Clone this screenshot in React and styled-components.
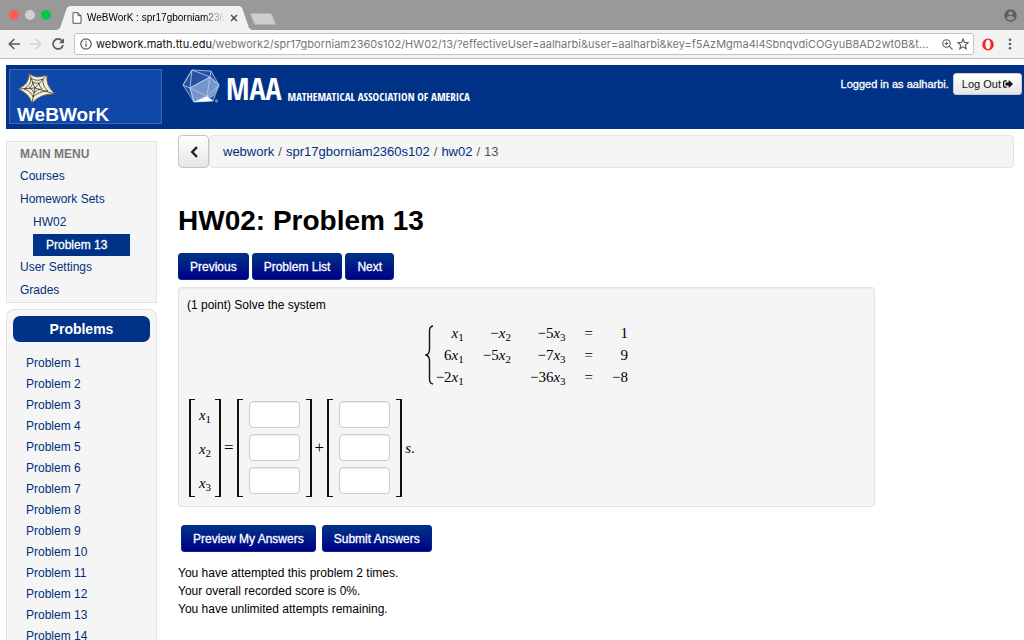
import styled, { createGlobalStyle, css } from 'styled-components'
import { FaSignOutAlt } from 'react-icons/fa'

const COLORS = {
    blue: '#003388',
    link: '#002f7c',
    well: '#f5f5f5',
    wellBorder: '#e3e3e3',
    chrome: '#f2f2f2',
    icon: '#5c5c5c',
}

const problems = Array.from({ length: 14 }, (_, i) => i + 1)

const equations = [
    [['', 1], ['−', 2], ['−5', 3], '1'],
    [['6', 1], ['−5', 2], ['−7', 3], '9'],
    [['−2', 1], null, ['−36', 3], '−8'],
]

export default function App() {
    return (
        <Window>
            <GlobalStyle />
            <BrowserBar />
            <Page>
                <Masthead />
                <Columns>
                    <SideBar />
                    <Problem />
                </Columns>
            </Page>
        </Window>
    )
}

function BrowserBar() {
    return (
        <>
            <TabStrip>
                <Lights>
                    <Light $color="#ff5b57" />
                    <Light $color="#d0d0d0" />
                    <Light $color="#00c94e" />
                </Lights>
                <Tab>
                    <svg width="10" height="12" viewBox="0 0 10 12" fill="#fff" stroke="#555">
                        <path d="M1 .7h5l3 3v7.6H1z M6 .7v3h3" />
                    </svg>
                    <TabTitle>WeBWorK : spr17gborniam236</TabTitle>
                    <PlainButton aria-label="Close tab">
                        <svg width="8" height="8" viewBox="0 0 8 8" stroke="#444" strokeWidth="1.4">
                            <path d="M1 1l6 6M7 1L1 7" />
                        </svg>
                    </PlainButton>
                </Tab>
                <NewTab aria-label="New tab" />
                <Profile width="13" height="13" viewBox="0 0 13 13">
                    <circle cx="6.5" cy="6.5" r="6.2" fill="#5e5e5e" />
                    <circle cx="6.5" cy="4.3" r="2" fill="#999" />
                    <path d="M2.6 9.2c.5-3 7.300-3 7.800 0-1.700 2.500-6.100 2.500-7.800 0z" fill="#999" />
                </Profile>
            </TabStrip>
            <Toolbar>
                <PlainButton aria-label="Back">
                    <svg width="12" height="12" viewBox="0 0 12 12" fill="none" stroke={COLORS.icon} strokeWidth="1.6">
                        <path d="M12 6H1.500M6.300 1L1.300 6l5 5" />
                    </svg>
                </PlainButton>
                <PlainButton aria-label="Forward">
                    <svg width="12" height="12" viewBox="0 0 12 12" fill="none" stroke="#d2d2d2" strokeWidth="1.6">
                        <path d="M0 6h10.500M5.700 1l5 5-5 5" />
                    </svg>
                </PlainButton>
                <PlainButton aria-label="Reload">
                    <svg width="12" height="12" viewBox="0 0 12 12" fill="none" stroke={COLORS.icon} strokeWidth="1.7">
                        <path d="M10 2.800A5 5 0 1 0 11 7" />
                        <path d="M12 .3v5H7z" fill={COLORS.icon} stroke="none" />
                    </svg>
                </PlainButton>
                <Address>
                    <svg width="12" height="12" viewBox="0 0 12 12" fill="none" stroke="#555" strokeWidth="1.200">
                        <circle cx="6" cy="6" r="5.200" />
                        <path d="M6 5.200v3.600M6 3v1.300" />
                    </svg>
                    <Url>
                        <b>webwork.math.ttu.edu</b>
                        /webwork2/spr17gborniam2360s102/HW02/13/?effectiveUser=aalharbi&amp;user=aalharbi&amp;key=f5AzMgma4l4SbnqvdiCOGyuB8AD2wt0B&amp;t…
                    </Url>
                    <svg width="11" height="11" viewBox="0 0 11 11" fill="none" stroke="#5c5c5c" strokeWidth="1.100">
                        <circle cx="4.500" cy="4.500" r="3.700" />
                        <path d="M7.200 7.200l3.300 3.300M2.700 4.500h3.600M4.500 2.700v3.600" />
                    </svg>
                    <svg width="12" height="12" viewBox="0 0 12 12" fill="none" stroke="#5c5c5c" strokeWidth="1.100">
                        <path d="M6 .9l1.400 3.500 3.800.3-2.900 2.400.9 3.700L6 8.800l-3.200 2 .9-3.700L.8 4.700l3.800-.3z" />
                    </svg>
                </Address>
                <svg width="12" height="13" viewBox="0 0 12 13">
                    <path fillRule="evenodd" fill="#ee2b2b" d="M6 .5a5.800 6 0 1 1 0 12 5.800 6 0 1 1 0-12zM6 1.800c-1.700 0-2.600 2-2.600 4.700s.9 4.700 2.600 4.700 2.600-2 2.600-4.700S7.700 1.800 6 1.800z" />
                </svg>
                <PlainButton aria-label="Menu">
                    <svg width="4" height="12" viewBox="0 0 4 12" fill={COLORS.icon}>
                        <circle cx="2" cy="1.800" r="1.300" />
                        <circle cx="2" cy="6" r="1.300" />
                        <circle cx="2" cy="10.200" r="1.300" />
                    </svg>
                </PlainButton>
            </Toolbar>
        </>
    )
}

function Masthead() {
    return (
        <Header>
            <WebworkLogo href="#">
                <svg width="40" height="33" viewBox="0 0 40 33" fill="none" stroke="#333" strokeWidth=".8">
                    <path fill="#f6f0d2" stroke="#6f6a55" d="M12 1Q18 8 30 3 28 13 38 22 24 21 15 31 12 21 1 17 13 12 12 1z" />
                    <path d="M12 1l6 15L30 3M38 22l-20-6-3 15M1 17l17-1" />
                    <path d="M14 6Q19 10 26 7 25 14 31 19 22 19 16 25 14 19 7 17 14 13 14 6z" />
                    <path d="M16 10Q19 12 22 11 22 14 25 17 20 17 17 21 16 17 12 16 16 14 16 10z" />
                </svg>
                <span>WeBWorK</span>
            </WebworkLogo>
            <MaaLogo href="#">
                <svg width="38" height="36" viewBox="0 0 38 36" fill="none" stroke="#b9cdee" strokeWidth=".8">
                    <path fill="#26519f" d="M10 1l19 1 8 14-6 16-19 1L1 16z" />
                    <path fill="#7795cd" d="M8 19L28 8l9 8-6 11-19 6z" />
                    <path fill="#fff" stroke="none" d="M12 33l13-6 6 5z" />
                    <path d="M10 1l18 7 1-6M28 8l9 8-12 11L28 8 8 19l17 8 6 5M10 1L8 19l4 14 13-6M1 16l7 3M10 1L1 16" />
                    <circle cx="34.500" cy="32" r="1" />
                </svg>
                <Maa>MAA</Maa>
                <MaaName>MATHEMATICAL ASSOCIATION OF AMERICA</MaaName>
            </MaaLogo>
            <Login>
                <span>Logged in as aalharbi.</span>
                <LogOut>Log Out <FaSignOutAlt size={10} /></LogOut>
            </Login>
        </Header>
    )
}

function SideBar() {
    return (
        <aside>
            <Menu>
                <h2>MAIN MENU</h2>
                <MenuLink href="#">Courses</MenuLink>
                <MenuLink href="#">Homework Sets</MenuLink>
                <MenuLink href="#" $nested>HW02</MenuLink>
                <MenuLink href="#" $active>Problem 13</MenuLink>
                <MenuLink href="#">User Settings</MenuLink>
                <MenuLink href="#">Grades</MenuLink>
            </Menu>
            <ProblemNav>
                <h2>Problems</h2>
                <ul>
                    {problems.map((n) => (
                        <li key={n}><a href="#">Problem {n}</a></li>
                    ))}
                </ul>
            </ProblemNav>
        </aside>
    )
}

function Problem() {
    return (
        <main>
            <Crumbs>
                <BackButton aria-label="Up a level">
                    <svg width="8" height="12" viewBox="0 0 8 12" fill="none" stroke="#222" strokeWidth="2.400">
                        <path d="M7 1.200L2.200 6 7 10.800" />
                    </svg>
                </BackButton>
                <Trail>
                    <a href="#">webwork</a><i>/</i>
                    <a href="#">spr17gborniam2360s102</a><i>/</i>
                    <a href="#">hw02</a><i>/</i>
                    <span>13</span>
                </Trail>
            </Crumbs>
            <Title>HW02: Problem 13</Title>
            <ButtonRow>
                <Button>Previous</Button>
                <Button>Problem List</Button>
                <Button>Next</Button>
            </ButtonRow>
            <Body>
                <Well>
                    <p>(1 point) Solve the system</p>
                    <Equations />
                    <Solution>
                        <Matrix><X n={1} /><X n={2} /><X n={3} /></Matrix>
                        <Operator>=</Operator>
                        <Matrix $wide><Answers name="Constant" /></Matrix>
                        <Operator>+</Operator>
                        <Matrix $wide><Answers name="Coefficient" /></Matrix>
                        <span><em>s</em>.</span>
                    </Solution>
                </Well>
            </Body>
            <ButtonRow $submit>
                <Button>Preview My Answers</Button>
                <Button>Submit Answers</Button>
            </ButtonRow>
            <Status>
                You have attempted this problem 2 times.<br />
                Your overall recorded score is 0%.<br />
                You have unlimited attempts remaining.
            </Status>
        </main>
    )
}

function X({ n, lead = '' }) {
    return <span>{lead}<em>x</em><sub>{n}</sub></span>
}

function Answers({ name }) {
    return [1, 2, 3].map((n) => <Answer key={n} aria-label={`${name} ${n}`} />)
}

function Equations() {
    return (
        <System>
            <svg width="9" height="60" viewBox="0 0 9 60" fill="none" stroke="#111" strokeWidth="1.400">
                <path d="M8 1Q4.500 1.500 4.500 6v18Q4.500 29 1 30q3.500 1 3.500 6v18Q4.500 58.500 8 59" />
            </svg>
            <table>
                <tbody>
                    {equations.map(([a, b, c, total]) => (
                        <tr key={total}>
                            {[a, b, c].map((term, i) => (
                                <td key={i}>{term && <X lead={term[0]} n={term[1]} />}</td>
                            ))}
                            <td>=</td>
                            <td>{total}</td>
                        </tr>
                    ))}
                </tbody>
            </table>
        </System>
    )
}

const GlobalStyle = createGlobalStyle`
    * {
        box-sizing: border-box;
    }
    body {
        margin: 0;
        color: #000;
        background: #fff;
        font: 13px/18px "Liberation Sans", Arial, sans-serif;
    }
    button, input {
        font: inherit;
    }
    h1, h2, p, ul {
        margin: 0;
        padding: 0;
    }
    a {
        color: ${COLORS.link};
        text-decoration: none;
    }
    svg {
        flex: none;
        display: block;
    }
`

const Window = styled.div`
    display: flex;
    flex-direction: column;
    height: 100vh;
    overflow: hidden;
`

const TabStrip = styled.div`
    display: flex;
    flex: none;
    height: 30px;
    padding: 0 7px 0 9px;
    background: #999;
`

const Lights = styled.div`
    display: flex;
    gap: 6px;
    padding-top: 10px;
    margin-right: 6px;
`

const Light = styled.span`
    width: 10px;
    height: 10px;
    border-radius: 50%;
    background: ${({ $color }) => $color};
`

const Tab = styled.div`
    display: flex;
    align-items: center;
    gap: 5px;
    width: 195px;
    height: 24px;
    margin-top: 6px;
    padding: 0 14px 0 15px;
    font-size: 10px;
    background: ${COLORS.chrome};
    clip-path: polygon(0 100%, 3px 92%, 10px 6%, 13px 0, 182px 0, 185px 6%, 192px 92%, 100% 100%);
`

const TabTitle = styled.span`
    flex: 1;
    overflow: hidden;
    white-space: nowrap;
    mask-image: linear-gradient(to right, #000 84%, transparent);
`

const PlainButton = styled.button`
    padding: 0;
    border: 0;
    background: none;
`

const NewTab = styled.button`
    width: 22px;
    height: 12px;
    margin: 13px 0 0 0;
    padding: 0;
    border: 1px solid #b5b5b5;
    border-radius: 2px;
    background: #cfcfcf;
    transform: skewX(22deg);
`

const Profile = styled.svg`
    margin: 9px 0 0 auto;
`

const Toolbar = styled.div`
    display: flex;
    flex: none;
    align-items: center;
    gap: 10px;
    height: 29px;
    padding: 0 12px 0 8px;
    background: ${COLORS.chrome};
    border-bottom: 1px solid #bdbdbd;

    > button:last-child {
        margin-left: 4px;
    }
`

const Address = styled.div`
    display: flex;
    flex: 1;
    align-items: center;
    gap: 4px;
    min-width: 0;
    height: 22px;
    margin: 0 -2px 0 0;
    padding: 0 4px 0 5px;
    border: 1px solid #c3c3c3;
    border-radius: 3px;
    background: #fff;
`

const Url = styled.span`
    flex: 1;
    overflow: hidden;
    color: #777;
    font-family: Inter, "Liberation Sans", sans-serif;
    font-size: 11px;
    white-space: nowrap;

    b {
        color: #111;
        font-weight: 400;
    }
`

const Page = styled.div`
    flex: 1;
    min-height: 0;
    padding: 6px 0 0 6px;
    overflow: hidden;
`

const Header = styled.header`
    display: flex;
    height: 64px;
    padding: 4px 0 0 3px;
    color: #fff;
    background: ${COLORS.blue};

    a {
        color: #fff;
    }
`

const WebworkLogo = styled.a`
    display: flex;
    flex-direction: column;
    width: 153px;
    height: 55px;
    padding: 2px 0 0 7px;
    border: 1px solid #4068ae;
    background: #1048aa;
    font-size: 19px;
    font-weight: 700;
    line-height: 20px;
`

const MaaLogo = styled.a`
    display: flex;
    align-items: flex-end;
    height: 36px;
    margin-left: 20px;
    font-family: "Open Sans Condensed", "Liberation Sans", sans-serif;
    font-weight: 700;
    white-space: nowrap;
`

const Maa = styled.span`
    margin-left: 6px;
    font-size: 30px;
    line-height: 32px;
`

const MaaName = styled.span`
    margin-left: 6px;
    font-size: 11px;
    line-height: 16px;
`

const Login = styled.div`
    display: flex;
    align-items: center;
    gap: 4px;
    height: 22px;
    margin: 4px 2px 0 auto;
    font-size: 11px;
    -webkit-text-stroke: 0.3px;
    white-space: nowrap;
`

const LogOut = styled.button`
    display: flex;
    align-items: center;
    gap: 2px;
    height: 22px;
    padding: 0 8px;
    border: 1px solid #ccc;
    border-radius: 3px;
    color: #111;
    background: linear-gradient(#fff, #e6e6e6);
    -webkit-text-stroke: 0;
`

const Columns = styled.div`
    display: grid;
    grid-template-columns: 151px 1fr;
    gap: 21px;
    padding-right: 10px;
`

const Menu = styled.nav`
    margin-top: 12px;
    padding: 1px 13px 0;
    border: 1px solid ${COLORS.wellBorder};
    background: ${COLORS.well};

    h2 {
        color: #777;
        font-size: 12px;
        line-height: 22px;
    }
`

const MenuLink = styled.a`
    display: block;
    height: 23px;
    font-size: 12px;
    line-height: 23px;
    ${({ $nested }) => $nested && css`
        padding-left: 13px;
    `}
    ${({ $active }) => $active && css`
        height: 22px;
        margin: 0 13px 0 13px;
        padding-left: 13px;
        color: #fff;
        line-height: 22px;
        background: ${COLORS.blue};
        -webkit-text-stroke: 0.3px;
    `}
`

const ProblemNav = styled.nav`
    margin-top: 6px;
    padding: 6px;
    border: 1px solid ${COLORS.wellBorder};
    border-radius: 8px;
    background: ${COLORS.well};

    h2 {
        border-radius: 7px;
        color: #fff;
        font-size: 14px;
        line-height: 26px;
        text-align: center;
        background: ${COLORS.blue};
    }
    ul {
        margin-top: 11px;
        padding-left: 13px;
        font-size: 12px;
        line-height: 21px;
        list-style: none;
    }
`

const Crumbs = styled.div`
    display: flex;
    margin-top: 6px;
`

const BackButton = styled.button`
    display: grid;
    place-items: center;
    width: 31px;
    height: 33px;
    padding: 0;
    border: 1px solid #c5c5c5;
    border-radius: 4px;
    background: linear-gradient(#fff, #e6e6e6);
`

const Trail = styled.nav`
    flex: 1;
    padding: 0 13px;
    border: 1px solid ${COLORS.wellBorder};
    border-radius: 4px;
    color: #555;
    line-height: 31px;
    background: ${COLORS.well};

    i {
        padding: 0 4px;
        font-style: normal;
    }
`

const Title = styled.h1`
    margin-top: 35px;
    font-size: 28px;
    line-height: 36px;
`

const ButtonRow = styled.div`
    display: flex;
    gap: ${({ $submit }) => ($submit ? 6 : 3)}px;
    margin: ${({ $submit }) => ($submit ? '18px 0 0 3px' : '14px 0 0')};
`

const Button = styled.button`
    height: 27px;
    padding: 0 11px;
    border: 1px solid #002a80;
    border-radius: 3px;
    color: #fff;
    background: linear-gradient(#003388, #000088);
    font-size: 12px;
    -webkit-text-stroke: 0.3px;
    white-space: nowrap;
`

const Body = styled.div`
    display: grid;
    grid-template-columns: 5fr 1fr;
    margin-top: 7px;
`

const Well = styled.section`
    min-height: 220px;
    padding: 8px;
    border: 1px solid ${COLORS.wellBorder};
    border-radius: 3px;
    background: ${COLORS.well};
    box-shadow: inset 0 1px 1px rgba(0, 0, 0, 0.05);
    font-size: 12px;
`

const mathText = css`
    font-family: "Liberation Serif", "Times New Roman", serif;
    font-size: 15px;

    sub {
        font-size: 11px;
        line-height: 0;
        vertical-align: -3px;
    }
`

const System = styled.div`
    display: flex;
    justify-content: center;
    align-items: center;
    gap: 2px;
    margin-top: 8px;

    table {
        border-collapse: collapse;
        ${mathText}
    }
    td {
        height: 22px;
        padding: 0 0 0 19px;
        line-height: 22px;
        text-align: right;
    }
    td:first-child {
        padding-left: 0;
    }
`

const Solution = styled.div`
    display: flex;
    align-items: center;
    gap: 3px;
    margin: 11px 0 0 2px;
    ${mathText}
`

const Operator = styled.span`
    font-size: 17px;
`

const Matrix = styled.div`
    display: flex;
    flex-direction: column;
    justify-content: space-between;
    align-items: center;
    width: ${({ $wide }) => ($wide ? 75 : 32)}px;
    height: 98px;
    padding: ${({ $wide }) => ($wide ? '2px 0 3px' : '7px 0 5px')};
    background:
        linear-gradient(#111, #111) 0 0 / 4px 1px,
        linear-gradient(#111, #111) 0 100% / 4px 1px,
        linear-gradient(#111, #111) 100% 0 / 4px 1px,
        linear-gradient(#111, #111) 100% 100% / 4px 1px;
    background-repeat: no-repeat;
    border: solid #111;
    border-width: 0 2px;
`

const Answer = styled.input`
    width: 51px;
    height: 27px;
    padding: 3px 5px;
    border: 1px solid #ccc;
    border-radius: 4px;
    background: #fff;
    box-shadow: inset 0 1px 1px rgba(0, 0, 0, 0.075);
`

const Status = styled.p`
    margin-top: 12px;
    font-size: 12px;
`
